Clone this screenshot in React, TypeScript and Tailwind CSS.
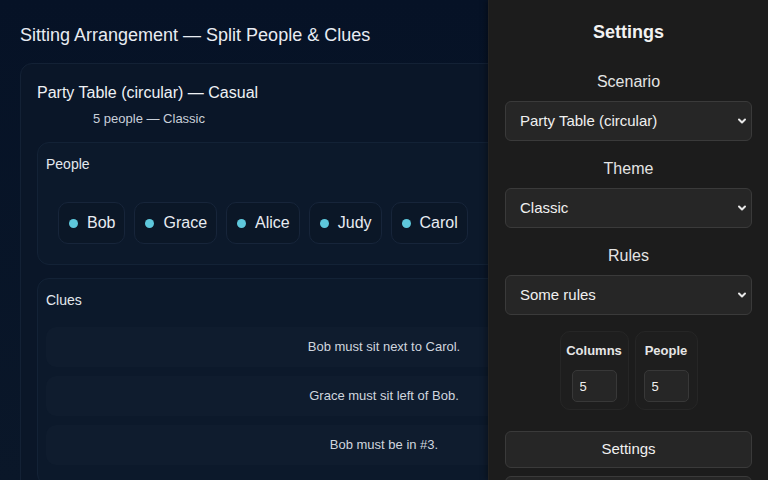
import { ChevronDown } from 'lucide-react'

const people = ['Bob', 'Grace', 'Alice', 'Judy', 'Carol']
const clues = ['Bob must sit next to Carol.', 'Grace must sit left of Bob.', 'Bob must be in #3.']

function Field({ label, value, options }: { label: string; value: string; options: string[] }) {
  return (
    <div className="flex flex-col">
      <div className="text-center text-[16px] leading-[20px] text-[#e4e4e4]">{label}</div>
      <div className="relative mt-[9px]">
        <select
          defaultValue={value}
          className="h-[40px] w-full appearance-none rounded-[6px] border border-[#3a3a3a] bg-[#262626] pl-[14px] pr-8 text-[15px] text-[#f0f0f0] outline-none"
        >
          {options.map((o) => (
            <option key={o}>{o}</option>
          ))}
        </select>
        <ChevronDown className="pointer-events-none absolute right-[4px] top-[14px] h-[12px] w-[12px] text-[#e8e8e8]" strokeWidth={4} />
      </div>
    </div>
  )
}

export default function App() {
  return (
    <div className="relative h-[480px] w-[768px] overflow-hidden bg-gradient-to-b from-[#061226] to-[#0a1729] font-['Liberation_Sans',Arial,sans-serif] text-[#e6e9ee]">
      <main className="px-5 pt-[24px]">
        <h1 className="text-[18px] leading-[22px] text-[#e8ecf2]">Sitting Arrangement — Split People &amp; Clues</h1>

        <section className="mt-[17px] rounded-[12px] border border-[#132135] bg-[#0a1628] px-4 pt-[17px] pb-4">
          <h2 className="text-[16px] leading-[24px] text-[#eef1f5]">Party Table (circular) — Casual</h2>
          <div className="mt-[4px] pl-[56px] text-[13px] leading-[20px] text-[#c9d0da]">5 people — Classic</div>

          <div className="mt-[13px] rounded-[12px] border border-[#132236] bg-[#0c192b] px-[8px] pt-[12px] pb-[20px]">
            <div className="text-[14px] leading-[18px] text-[#e4e8ee]">People</div>
            <div className="mt-[29px] flex gap-[9px] pl-[12px]">
              {people.map((p) => (
                <div
                  key={p}
                  className="flex h-[42px] items-center gap-[9px] rounded-[10px] border border-[#17253a] bg-[#0b1727] pl-[10px] pr-[9px]"
                >
                  <span className="h-[9px] w-[9px] rounded-full bg-[#5ec8dc]" />
                  <span className="text-[16px] text-[#e8ecf2]">{p}</span>
                </div>
              ))}
            </div>
          </div>

          <div className="mt-[13px] rounded-[12px] border border-[#132236] bg-[#0c192b] px-[8px] pt-[12px] pb-[20px]">
            <div className="text-[14px] leading-[18px] text-[#e4e8ee]">Clues</div>
            <div className="mt-[18px] flex flex-col gap-[9px]">
              {clues.map((c) => (
                <div
                  key={c}
                  className="flex h-[40px] items-center justify-center rounded-[10px] bg-[#0f1c2e] text-[13px] text-[#cfd6df]"
                >
                  {c}
                </div>
              ))}
            </div>
          </div>
        </section>
      </main>

      <aside className="absolute top-0 right-0 bottom-0 w-[280px] border-l border-[#222] bg-[#1c1c1c] px-4 shadow-[-2px_0_6px_rgba(0,0,0,0.35)]">
        <div className="pt-[20px] text-center text-[18px] font-bold leading-[24px] text-[#f2f2f2]">Settings</div>
        <div className="mt-[28px] flex flex-col gap-[18px]">
          <Field label="Scenario" value="Party Table (circular)" options={['Party Table (circular)', 'Dinner Row', 'Classroom']} />
          <Field label="Theme" value="Classic" options={['Classic', 'Modern']} />
          <Field label="Rules" value="Some rules" options={['Some rules', 'Many rules', 'No rules']} />
        </div>

        <div className="mt-[16px] flex justify-center gap-[6px]">
          {[
            { label: 'Columns', w: 'w-[69px]' },
            { label: 'People', w: 'w-[63px]' },
          ].map((b) => (
            <div
              key={b.label}
              className={`flex h-[79px] ${b.w} flex-col items-center rounded-[10px] border border-[#262626] bg-[#1e1e1e] pt-[11px]`}
            >
              <div className="text-[13px] font-semibold leading-[16px] text-[#e6e6e6]">{b.label}</div>
              <input
                defaultValue="5"
                className="mt-[11px] h-[32px] w-[45px] rounded-[5px] border border-[#383838] bg-[#262626] pl-[7px] text-[13px] text-[#f0f0f0] outline-none"
              />
            </div>
          ))}
        </div>

        <button
          type="button"
          className="mt-[21px] h-[37px] w-full rounded-[6px] border border-[#3a3a3a] bg-[#262626] text-[15px] text-[#f0f0f0]"
        >
          Settings
        </button>
        <div className="mt-[8px] h-[37px] w-full rounded-[6px] border border-[#3a3a3a] bg-[#262626]" />
      </aside>
    </div>
  )
}
